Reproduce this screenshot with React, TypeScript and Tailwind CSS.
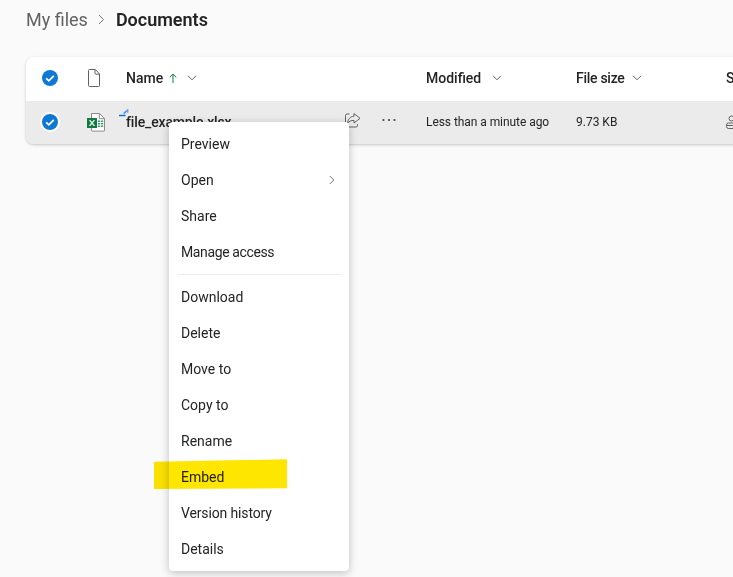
import React from "react";

const font = { fontFamily: "Roboto, 'Noto Sans', sans-serif" };

function Check({ ring }: { ring?: boolean }) {
  return (
    <svg width="20" height="20" viewBox="0 0 20 20" className="shrink-0">
      {ring && <circle cx="10" cy="10" r="10" fill="#fff" />}
      <circle cx="10" cy="10" r="8" fill="#0f78d4" />
      <path d="M6.2 10.3l2.6 2.5 5-5" fill="none" stroke="#fff" strokeWidth="1.8" />
    </svg>
  );
}

function Chevron({ className = "" }: { className?: string }) {
  return (
    <svg width="10" height="6" viewBox="0 0 10 6" className={className}>
      <path d="M1 .8l4 4 4-4" fill="none" stroke="#616161" strokeWidth="1" />
    </svg>
  );
}

function Item({ label, arrow, className = "" }: { label: string; arrow?: boolean; className?: string }) {
  return (
    <div className={`h-9 flex items-center justify-between pl-3 pr-[14px] text-[14px] text-[#242424] ${className}`}>
      <span>{label}</span>
      {arrow && (
        <svg width="6" height="10" viewBox="0 0 6 10">
          <path d="M.8 1l4 4-4 4" fill="none" stroke="#757575" strokeWidth="1" />
        </svg>
      )}
    </div>
  );
}

export default function App() {
  return (
    <div className="relative w-[733px] h-[577px] overflow-hidden bg-[#fafafa]" style={font}>
      <div className="h-[57px] pl-[26px] pt-[7px] flex items-start">
        <div className="flex items-center h-6">
          <span className="text-[18px] text-[#616161]">My files</span>
          <svg width="7" height="11" viewBox="0 0 7 11" className="ml-[10px] mr-[11px]">
            <path d="M1 1l4.5 4.5L1 10" fill="none" stroke="#757575" strokeWidth="1" />
          </svg>
          <span className="text-[18px] font-semibold text-[#242424]">Documents</span>
        </div>
      </div>

      <div className="ml-[26px] w-[760px] rounded-l-[8px] bg-white shadow-[0_1px_3px_rgba(0,0,0,0.22)] overflow-hidden">
        <div className="h-11 pb-[2px] flex items-center text-[14px] font-medium text-[#242424]">
          <div className="w-[50px] pl-[14px] flex"><Check /></div>
          <div className="w-[50px] pl-[10px] flex">
            <svg width="16" height="18" viewBox="0 0 16 18">
              <path d="M2.5 1.5a1 1 0 0 1 1-1h5.8l4.2 4.4v11.6a1 1 0 0 1-1 1h-9a1 1 0 0 1-1-1z M9 .8v3.4a1 1 0 0 0 1 1h3.4" fill="none" stroke="#616161" strokeWidth="1" />
            </svg>
          </div>
          <div className="w-[300px] flex items-center">
            <span>Name</span>
            <svg width="10" height="11" viewBox="0 0 10 11" className="ml-[5px]">
              <path d="M5 10V1.2M1.8 4.3L5 1.2l3.2 3.1" fill="none" stroke="#107c41" strokeWidth="1" />
            </svg>
            <Chevron className="ml-[9px]" />
          </div>
          <div className="w-[150px] flex items-center"><span>Modified</span><Chevron className="ml-[11px]" /></div>
          <div className="w-[150px] flex items-center"><span className="tracking-[-0.02em]">File size</span><Chevron className="ml-[7px]" /></div>
          <span>Sharing</span>
        </div>
        <div className="h-[43px] pb-px flex items-center bg-[#ebebeb] text-[#242424]">
          <div className="w-[50px] pl-[14px] flex"><Check ring /></div>
          <div className="w-[50px] pl-[10px] flex">
            <svg width="20" height="20" viewBox="0 0 20 20">
              <path d="M5.5 1.5h8l5 5v12a.6.6 0 0 1-.6.6H6.1a.6.6 0 0 1-.6-.6z" fill="#fff" stroke="#8a8a8a" strokeWidth="1" />
              <path d="M13.3 1.5V6.7h5.2" fill="none" stroke="#8a8a8a" strokeWidth="1" />
              <path d="M12 8.5h2.2v1.6H12zM15 8.5h2.2v1.6H15zM12 11h2.2v1.6H12zM15 11h2.2v1.6H15zM12 13.5h2.2v1.6H12zM15 13.5h2.2v1.6H15z" fill="#33a06d" />
              <rect x="1" y="6" width="10" height="10" rx=".6" fill="#107c41" />
              <path d="M3.6 8.2l4.8 5.6M8.4 8.2l-4.8 5.6" stroke="#fff" strokeWidth="1.3" />
            </svg>
          </div>
          <div className="w-[300px] flex items-center relative">
            <span className="text-[14px] font-medium tracking-[-0.01em]">file_example.xlsx</span>
            <svg width="10" height="10" viewBox="0 0 10 10" className="absolute left-[-7px] top-[-3px]">
              <path d="M0 6.5h6.5" fill="none" stroke="#0a6fe0" strokeWidth="1.5" />
              <path d="M4.8 4.6L7.8 1.6" fill="none" stroke="#4a90f0" strokeWidth="1.5" />
              <path d="M8.7 0v3.8" fill="none" stroke="#6ca6f0" strokeWidth="1.5" />
            </svg>
            <div className="absolute left-[218px] top-[-1px] flex items-center gap-[19px]">
              <svg width="18" height="18" viewBox="0 0 18 18">
                <path d="M10 2.5l6 4.8-6 4.8V9.4c-3 0-5 .8-6.5 3C3.8 8.5 6 5.4 10 5.2z" fill="none" stroke="#616161" strokeWidth="1" />
                <path d="M5.5 3H3a1.5 1.5 0 0 0-1.5 1.5v10A1.5 1.5 0 0 0 3 16h9a1.5 1.5 0 0 0 1.5-1.5V13" fill="none" stroke="#616161" strokeWidth="1" />
              </svg>
              <svg width="16" height="4" viewBox="0 0 16 4">
                <circle cx="2.5" cy="2" r="1.1" fill="#424242" />
                <circle cx="8" cy="2" r="1.1" fill="#424242" />
                <circle cx="13.5" cy="2" r="1.1" fill="#424242" />
              </svg>
            </div>
          </div>
          <div className="w-[150px] text-[12px] tracking-[-0.005em]">Less than a minute ago</div>
          <div className="w-[150px] text-[12px]">9.73 KB</div>
          <svg width="16" height="16" viewBox="0 0 16 16">
            <circle cx="5.5" cy="4.5" r="2.5" fill="none" stroke="#616161" />
            <path d="M2.5 9h6a2 2 0 0 1 2 2v1.5a2 2 0 0 1-2 2h-6a2 2 0 0 1-2-2V11a2 2 0 0 1 2-2zM.5 11.5h10" fill="none" stroke="#616161" />
          </svg>
        </div>
      </div>

      <div className="absolute left-[169px] top-[122px] w-[180px] h-[449px] pt-1 bg-white rounded-[4px] shadow-[0_2px_8px_rgba(0,0,0,0.24)]">
        <Item label="Preview" />
        <Item label="Open" arrow />
        <Item label="Share" />
        <Item label="Manage access" className="tracking-[-0.027em]" />
        <div className="mx-2 my-1 h-px bg-[#ededed]" />
        <Item label="Download" />
        <Item label="Delete" />
        <Item label="Move to" />
        <Item label="Copy to" />
        <Item label="Rename" />
        <Item label="Embed" />
        <Item label="Version history" className="tracking-[-0.01em]" />
        <Item label="Details" />
      </div>

      <svg width="133" height="31" viewBox="0 0 133 31" className="absolute left-[154px] top-[459px] mix-blend-multiply">
        <path d="M0 2.7L133 .3V29.3L0 30z" fill="#ffe600" />
      </svg>
    </div>
  );
}
